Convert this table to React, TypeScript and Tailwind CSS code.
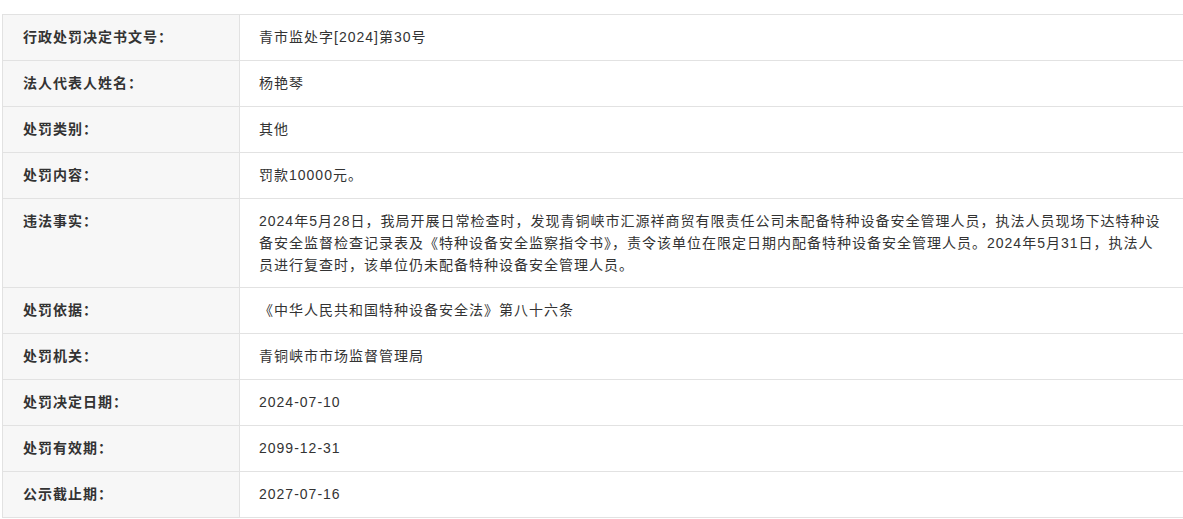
// 行政处罚信息公示表 — 左列标签（灰底加粗），右列内容。

const rows: { label: string; value: string }[] = [
  { label: '行政处罚决定书文号：', value: '青市监处字[2024]第30号' },
  { label: '法人代表人姓名：', value: '杨艳琴' },
  { label: '处罚类别：', value: '其他' },
  { label: '处罚内容：', value: '罚款10000元。' },
  {
    label: '违法事实：',
    value:
      '2024年5月28日，我局开展日常检查时，发现青铜峡市汇源祥商贸有限责任公司未配备特种设备安全管理人员，执法人员现场下达特种设备安全监督检查记录表及《特种设备安全监察指令书》，责令该单位在限定日期内配备特种设备安全管理人员。2024年5月31日，执法人员进行复查时，该单位仍未配备特种设备安全管理人员。',
  },
  { label: '处罚依据：', value: '《中华人民共和国特种设备安全法》第八十六条' },
  { label: '处罚机关：', value: '青铜峡市市场监督管理局' },
  { label: '处罚决定日期：', value: '2024-07-10' },
  { label: '处罚有效期：', value: '2099-12-31' },
  { label: '公示截止期：', value: '2027-07-16' },
]

export default function App() {
  return (
    <div
      className="h-[519px] w-full overflow-hidden bg-white pt-[14px] pl-[2px] text-[14px] tracking-[1px] text-[#333]"
      style={{ fontFamily: '"Liberation Sans", "Noto Sans CJK SC", sans-serif' }}
    >
      <div className="w-[1190px] border border-[#e2e2e2]">
        {rows.map((r, i) => (
          <div
            key={r.label}
            className={`flex ${i > 0 ? 'border-t border-[#e2e2e2]' : ''}`}
          >
            {/* 标签列：顶部对齐 */}
            <div className="w-[237px] shrink-0 border-r border-[#e2e2e2] bg-[#f7f7f7] py-[11px] pl-[20px] font-bold leading-[23px]">
              {r.label}
            </div>
            {/* 内容列 */}
            <div className="min-h-[45px] flex-1 py-[11px] pl-[19px] pr-[30px] leading-[22px]">
              {r.value}
            </div>
          </div>
        ))}
      </div>
    </div>
  )
}
